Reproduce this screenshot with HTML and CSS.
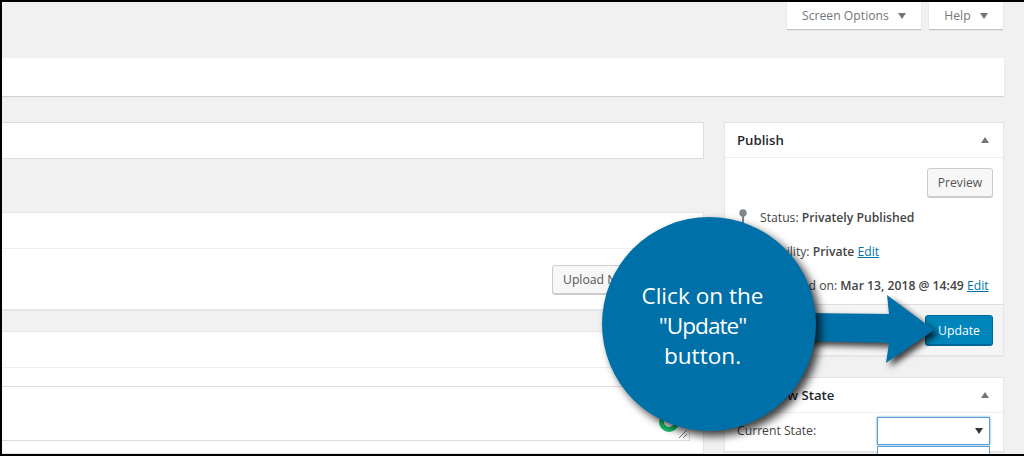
FILE: index.html
```html
<!DOCTYPE html>
<html>

<head>
    <title>Edit Page</title>
    <link rel="stylesheet" href="styles.css">
</head>

<body>
    <div class="screen-meta">
        <button class="meta-tab">Screen Options <span class="down"></span></button>
        <button class="meta-tab help-tab">Help <span class="down"></span></button>
    </div>

    <div class="notice"></div>

    <div class="columns">
        <div class="main-col">
            <div class="title-box"></div>

            <div class="panel media-panel">
                <div class="panel-row"></div>
                <div class="media-row">
                    <button class="btn">Upload New Media</button>
                </div>
            </div>

            <div class="panel editor-panel">
                <div class="panel-row"></div>
                <div class="editor-gap"></div>
                <div class="editor-wrap">
                    <div class="editor-box">
                        <span class="grammar-dot"></span>
                        <svg class="resize" width="10" height="10" viewBox="0 0 10 10">
                            <path d="M1 9 L9 1 M5 9 L9 5" stroke="#777" fill="none" />
                        </svg>
                    </div>
                </div>
            </div>
        </div>

        <div class="side-col">
            <div class="box publish-box">
                <div class="box-head">
                    <h3>Publish</h3>
                    <span class="up"></span>
                </div>
                <div class="preview-row">
                    <button class="btn">Preview</button>
                </div>
                <div class="misc">
                    <div class="misc-row">
                        <svg class="misc-icon" width="12" height="18" viewBox="0 0 12 18">
                            <circle cx="6" cy="5" r="3.7" fill="#82878c" />
                            <rect x="5" y="8" width="2" height="9" fill="#82878c" />
                        </svg>
                        <span>Status: <b>Privately Published</b></span>
                    </div>
                    <div class="misc-row">
                        <span class="misc-icon"></span>
                        <span>Visibility: <b>Private</b> <a href="#">Edit</a></span>
                    </div>
                    <div class="misc-row">
                        <span class="misc-icon"></span>
                        <span>Published on: <b>Mar 13, 2018 @ 14:49</b> <a href="#">Edit</a></span>
                    </div>
                </div>
                <div class="major">
                    <button class="btn-primary">Update</button>
                </div>
            </div>

            <div class="box workflow-box">
                <div class="box-head">
                    <h3>Workflow State</h3>
                    <span class="up"></span>
                </div>
                <div class="state-row">
                    <span>Current State:</span>
                    <div class="state-select">
                        <div class="select-field"><span class="select-arrow"></span></div>
                        <div class="select-list"></div>
                    </div>
                </div>
            </div>
        </div>
    </div>

    <div class="callout">
        <svg class="arrow" width="140" height="80" viewBox="0 0 140 80">
            <path d="M0 20 L83 21 L81 2 L128 37 L80 70 L83 50 L0 48 Z" fill="#0071a8" />
        </svg>
        <div class="bubble">
            <div>Click on the<br><span class="tight">"Update"</span><br>button.</div>
        </div>
    </div>
</body>

</html>
```

FILE: styles.css
```css
* {
    box-sizing: border-box;
}

html,
body {
    height: 456px;
}

body {
    margin: 0;
    border: 2px solid #000;
    border-right: none;
    background-color: #f1f1f1;
    color: #444;
    font-family: "Open Sans", sans-serif;
    font-size: 12.2px;
    overflow: hidden;
    position: relative;
}

.screen-meta {
    display: flex;
    justify-content: flex-end;
    gap: 8px;
    height: 27px;
    padding-right: 21px;
}

.meta-tab {
    width: 134px;
    height: 27px;
    border: none;
    background-color: #fff;
    box-shadow: 0 1px 1px rgba(0, 0, 0, 0.2);
    color: #72777c;
    font-family: inherit;
    font-size: 12.2px;
    padding: 0;
}

.help-tab {
    width: 74px;
}

.down {
    display: inline-block;
    margin-left: 6px;
    border-top: 6px solid #72777c;
    border-left: 4px solid transparent;
    border-right: 4px solid transparent;
    vertical-align: 1px;
}

.notice {
    height: 38px;
    margin: 29px 20px 0 0;
    background-color: #fff;
    box-shadow: 0 1px 1px rgba(0, 0, 0, 0.12);
}

.columns {
    display: flex;
    gap: 20px;
    margin-top: 26px;
    padding-right: 20px;
}

.main-col {
    width: 702px;
}

.title-box {
    height: 37px;
    background-color: #fff;
    border: 1px solid #ddd;
    border-left: none;
}

.panel {
    background-color: #fff;
    border: 1px solid #e5e5e5;
    border-left: none;
    box-shadow: 0 1px 1px rgba(0, 0, 0, 0.04);
}

.media-panel {
    height: 98px;
    margin-top: 53px;
}

.panel-row {
    height: 36px;
    border-bottom: 1px solid #eee;
}

.media-row {
    display: flex;
    justify-content: flex-end;
    padding: 16px 13px 0 0;
}

.btn {
    height: 29px;
    padding: 0 10px;
    border: 1px solid #ccc;
    border-radius: 3px;
    background-color: #f7f7f7;
    box-shadow: 0 1px 0 #ccc;
    color: #555;
    font-family: inherit;
    font-size: 12.2px;
}

.preview-row .btn {
    width: 66px;
    padding: 0;
}

.media-row .btn {
    width: 138px;
    text-align: left;
}

.editor-panel {
    height: 123px;
    margin-top: 21px;
}

.editor-gap {
    height: 19px;
    border-bottom: 1px solid #ddd;
}

.editor-wrap {
    padding-right: 13px;
}

.editor-box {
    height: 54px;
    border-right: 1px solid #ddd;
    border-bottom: 1px solid #ddd;
    position: relative;
}

.grammar-dot {
    position: absolute;
    right: 10px;
    bottom: 8px;
    width: 20px;
    height: 20px;
    border: 5px solid #15c26b;
    border-radius: 50%;
}

.resize {
    position: absolute;
    right: 1px;
    bottom: 1px;
}

.side-col {
    width: 280px;
}

.box {
    background-color: #fff;
    border: 1px solid #e5e5e5;
    box-shadow: 0 1px 1px rgba(0, 0, 0, 0.04);
}

.publish-box {
    display: flex;
    flex-direction: column;
    height: 234px;
}

.box-head {
    display: flex;
    justify-content: space-between;
    align-items: center;
    height: 35px;
    padding: 0 14px 0 12px;
    border-bottom: 1px solid #eee;
}

.box-head h3 {
    margin: 0;
    color: #23282d;
    font-size: 13.2px;
    font-weight: 600;
}

.up {
    border-bottom: 6px solid #72777c;
    border-left: 4px solid transparent;
    border-right: 4px solid transparent;
}

.preview-row {
    display: flex;
    justify-content: flex-end;
    padding: 10px 10px 0 0;
}

.misc {
    padding: 3px 0 0 12px;
}

.misc-row {
    display: flex;
    align-items: center;
    height: 34px;
    white-space: nowrap;
}

.misc-row b {
    font-weight: 600;
}

.misc-icon {
    display: block;
    width: 12px;
    margin-right: 11px;
    flex: none;
}

a {
    color: #0073aa;
}

.major {
    display: flex;
    justify-content: flex-end;
    height: 51px;
    margin-top: auto;
    padding: 10px 10px 0 0;
    background-color: #f5f5f5;
    border-top: 1px solid #ddd;
}

.btn-primary {
    width: 68px;
    height: 30px;
    border: 1px solid #006799;
    border-radius: 3px;
    background-color: #0085ba;
    box-shadow: 0 1px 0 #006799;
    color: #fff;
    font-family: inherit;
    font-size: 12.2px;
    padding: 0;
}

.workflow-box {
    height: 75px;
    margin-top: 21px;
}

.state-row {
    display: flex;
    justify-content: space-between;
    padding: 4px 13px 0 12px;
    line-height: 28px;
}

.state-select {
    width: 113px;
}

.select-field {
    display: flex;
    justify-content: flex-end;
    align-items: center;
    height: 28px;
    padding-right: 6px;
    border: 1px solid #5b9dd9;
    box-shadow: 0 0 2px rgba(30, 140, 190, 0.8);
    background-color: #fff;
}

.select-arrow {
    border-top: 6px solid #32373c;
    border-left: 4px solid transparent;
    border-right: 4px solid transparent;
}

.select-list {
    height: 20px;
    margin-top: 1px;
    background-color: #fff;
    border: 1px solid #5b9dd9;
}

/* annotation on top of the screenshot */
.callout {
    position: absolute;
    left: 600px;
    top: 215px;
    width: 214px;
    height: 214px;
}

.bubble {
    display: flex;
    align-items: center;
    justify-content: center;
    width: 214px;
    height: 214px;
    padding: 4px 13px 0 0;
    border-radius: 50%;
    background-color: #0071a8;
    box-shadow: 5px 5px 8px rgba(0, 0, 0, 0.75);
    color: #fff;
    font-size: 22.6px;
    line-height: 30px;
    text-align: center;
    position: relative;
}

.tight {
    letter-spacing: -1px;
}

.arrow {
    position: absolute;
    left: 204px;
    top: 76px;
    filter: drop-shadow(4px 4px 3px rgba(0, 0, 0, 0.75));
}
```
